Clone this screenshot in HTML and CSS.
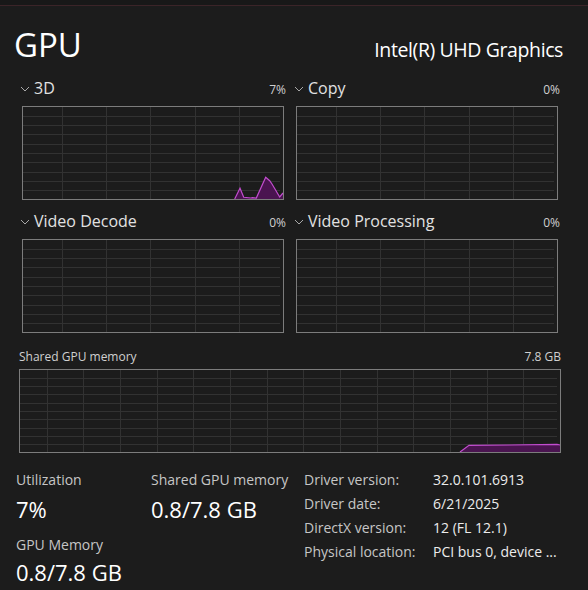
FILE: index.html
```html
<!DOCTYPE html>
<html>
<head>
<meta charset="utf-8">
<title>GPU</title>
<link rel="stylesheet" href="styles.css">
</head>
<body>
<div class="topbar"></div>
<header class="header">
  <h1 class="title">GPU</h1>
  <div class="model">Intel(R) UHD Graphics</div>
</header>

<section class="engines">
  <div class="engine">
    <div class="engine-head">
      <svg class="chev" width="10" height="6" viewBox="0 0 10 6"><polyline points="1,1 5,5 9,1"/></svg>
      <span class="engine-name">3D</span>
      <span class="engine-pct">7%</span>
    </div>
    <svg class="graph" width="262" height="94" viewBox="0 0 262 94">
      <path class="grid" d="M40.5 1V93M84.5 1V93M128.5 1V93M173.5 1V93M217.5 1V93M1 10.5H258M1 19.5H258M1 28.5H258M1 38.5H258M1 47.5H258M1 56.5H258M1 66.5H258M1 75.5H258M1 84.5H258"/>
      <polygon class="fill" points="212.7,93 218,82.3 221.7,91.3 229,92 230.3,91.7 234.3,92 243.7,71.3 247.7,74.7 250,78 257.7,91 261,87 261,93"/>
      <polyline class="line" points="212.7,93 218,82.3 221.7,91.3 229,92 230.3,91.7 234.3,92 243.7,71.3 247.7,74.7 250,78 257.7,91 261,87"/>
      <rect class="frame" x="0.5" y="0.5" width="261" height="93"/>
    </svg>
  </div>
  <div class="engine">
    <div class="engine-head">
      <svg class="chev" width="10" height="6" viewBox="0 0 10 6"><polyline points="1,1 5,5 9,1"/></svg>
      <span class="engine-name">Copy</span>
      <span class="engine-pct">0%</span>
    </div>
    <svg class="graph" width="262" height="94" viewBox="0 0 262 94">
      <path class="grid" d="M40.5 1V93M84.5 1V93M128.5 1V93M173.5 1V93M217.5 1V93M1 10.5H258M1 19.5H258M1 28.5H258M1 38.5H258M1 47.5H258M1 56.5H258M1 66.5H258M1 75.5H258M1 84.5H258"/>
      <rect class="frame" x="0.5" y="0.5" width="261" height="93"/>
    </svg>
  </div>
  <div class="engine">
    <div class="engine-head">
      <svg class="chev" width="10" height="6" viewBox="0 0 10 6"><polyline points="1,1 5,5 9,1"/></svg>
      <span class="engine-name">Video Decode</span>
      <span class="engine-pct">0%</span>
    </div>
    <svg class="graph" width="262" height="94" viewBox="0 0 262 94">
      <path class="grid" d="M40.5 1V93M84.5 1V93M128.5 1V93M173.5 1V93M217.5 1V93M1 10.5H258M1 19.5H258M1 28.5H258M1 38.5H258M1 47.5H258M1 56.5H258M1 66.5H258M1 75.5H258M1 84.5H258"/>
      <rect class="frame" x="0.5" y="0.5" width="261" height="93"/>
    </svg>
  </div>
  <div class="engine">
    <div class="engine-head">
      <svg class="chev" width="10" height="6" viewBox="0 0 10 6"><polyline points="1,1 5,5 9,1"/></svg>
      <span class="engine-name">Video Processing</span>
      <span class="engine-pct">0%</span>
    </div>
    <svg class="graph" width="262" height="94" viewBox="0 0 262 94">
      <path class="grid" d="M40.5 1V93M84.5 1V93M128.5 1V93M173.5 1V93M217.5 1V93M1 10.5H258M1 19.5H258M1 28.5H258M1 38.5H258M1 47.5H258M1 56.5H258M1 66.5H258M1 75.5H258M1 84.5H258"/>
      <rect class="frame" x="0.5" y="0.5" width="261" height="93"/>
    </svg>
  </div>
</section>

<section class="shared">
  <div class="shared-head">
    <span>Shared GPU memory</span>
    <span>7.8 GB</span>
  </div>
  <svg class="graph" width="542" height="84" viewBox="0 0 542 84">
    <path class="grid" d="M28.5 1V83M64.5 1V83M101.5 1V83M138.5 1V83M174.5 1V83M211.5 1V83M248.5 1V83M284.5 1V83M321.5 1V83M358.5 1V83M394.5 1V83M431.5 1V83M468.5 1V83M504.5 1V83M1 9.5H538M1 17.5H538M1 25.5H538M1 34.5H538M1 42.5H538M1 50.5H538M1 59.5H538M1 67.5H538M1 75.5H538"/>
    <polygon class="fill" points="441,83 450,76.3 491,76 538,75.3 541,76 541,83"/>
    <polyline class="line" points="441,83 450,76.3 491,76 538,75.3 541,76"/>
    <rect class="frame" x="0.5" y="0.5" width="541" height="83"/>
  </svg>
</section>

<section class="stats">
  <div class="stat-col">
    <div class="stat-label">Utilization</div>
    <div class="stat-value">7%</div>
    <div class="stat-label second">GPU Memory</div>
    <div class="stat-value second">0.8/7.8 GB</div>
  </div>
  <div class="stat-col">
    <div class="stat-label">Shared GPU memory</div>
    <div class="stat-value">0.8/7.8 GB</div>
  </div>
  <dl class="details">
    <dt>Driver version:</dt><dd>32.0.101.6913</dd>
    <dt>Driver date:</dt><dd>6/21/2025</dd>
    <dt>DirectX version:</dt><dd>12 (FL 12.1)</dd>
    <dt>Physical location:</dt><dd>PCI bus 0, device ...</dd>
  </dl>
</section>
</body>
</html>
```

FILE: styles.css
```css
* { box-sizing: border-box; }

html, body {
  margin: 0;
  padding: 0;
  background: #1c1c1c;
  color: #ffffff;
  font-family: "Open Sans", "Noto Sans", sans-serif;
  overflow: hidden;
}

.topbar {
  height: 6px;
  background: #181818;
  border-bottom: 1px solid #3b2428;
}

.header {
  display: flex;
  justify-content: space-between;
  align-items: baseline;
  margin-top: 22px;
  padding: 0 25px 0 14px;
}

.title {
  margin: 0;
  font-size: 33px;
  font-weight: 400;
  line-height: 1;
  color: #ffffff;
}

.model {
  font-size: 19.5px;
  letter-spacing: -0.4px;
  line-height: 1;
  color: #ffffff;
}

.engines {
  display: grid;
  grid-template-columns: 266px 266px;
  column-gap: 8px;
  margin-top: 19px;
  padding-left: 20px;
}

.engine {
  display: flex;
  flex-direction: column;
  margin-bottom: 13px;
}

.engine-head {
  display: flex;
  align-items: baseline;
  height: 16px;
}

.chev {
  align-self: center;
  margin-top: 2px;
}

.chev polyline {
  fill: none;
  stroke: #a8a8a8;
  stroke-width: 1;
}

.engine-name {
  margin-left: 4px;
  font-size: 16px;
  line-height: 1;
  color: #e2e2e2;
}

.engine-pct {
  margin-left: auto;
  font-size: 12px;
  line-height: 1;
  color: #d0d0d0;
}

.graph {
  display: block;
  margin-top: 10px;
  margin-left: 2px;
}

.grid {
  fill: none;
  stroke: #323232;
  stroke-width: 1;
}

.frame {
  fill: none;
  stroke: #7c7c7c;
  stroke-width: 1;
}

.fill {
  fill: #4a1450;
  stroke: none;
}

.line {
  fill: none;
  stroke: #c24dcf;
  stroke-width: 1.2;
}

.shared {
  margin-top: 5px;
  padding-left: 19px;
  width: 561px;
}

.shared-head {
  display: flex;
  justify-content: space-between;
  font-size: 12px;
  line-height: 1;
  color: #d0d0d0;
}

.shared .graph {
  margin-top: 6px;
  margin-left: 0;
}

.stats {
  display: grid;
  grid-template-columns: 135px 153px auto;
  align-items: start;
  margin-top: 20px;
  padding-left: 16px;
}

.stat-label {
  font-size: 14px;
  line-height: 1;
  color: #c6c6c6;
}

.stat-value {
  margin-top: 11px;
  font-size: 22px;
  line-height: 1;
  color: #ffffff;
}

.stat-label.second {
  margin-top: 18px;
}

.stat-value.second {
  margin-top: 9px;
}

.details {
  display: grid;
  grid-template-columns: 129px auto;
  align-content: start;
  margin: -5px 0 0 0;
  font-size: 14px;
  line-height: 24px;
}

.details dt {
  color: #c6c6c6;
}

.details dd {
  margin: 0;
  color: #ececec;
  white-space: nowrap;
}
```
